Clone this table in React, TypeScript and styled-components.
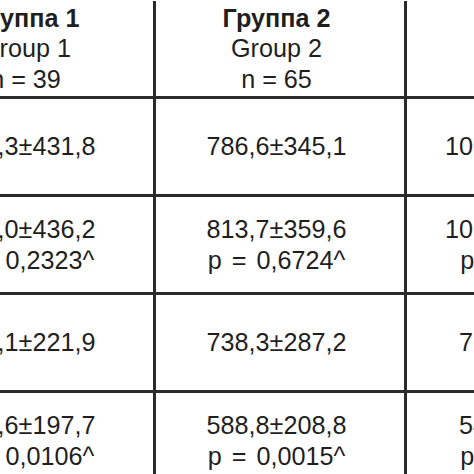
import React from "react";
import styled, { createGlobalStyle } from "styled-components";

const Global = createGlobalStyle`
  html, body {
    margin: 0;
    padding: 0;
    background: #ffffff;
    overflow: hidden;
  }
  body {
    width: 474px;
    height: 474px;
  }
`;

const Viewport = styled.div`
  width: 474px;
  height: 474px;
  overflow: hidden;
  background: #ffffff;
`;

const Table = styled.div`
  display: grid;
  grid-template-columns: repeat(3, 251px);
  grid-auto-rows: 98px;
  margin-left: -95px;
  margin-top: 1px;
  width: max-content;
  font-family: "Liberation Sans", Arial, sans-serif;
  font-size: 25.2px;
  line-height: 30.5px;
  color: #1f1f1f;
`;

const Cell = styled.div<{ $last?: boolean }>`
  box-sizing: border-box;
  display: flex;
  flex-direction: column;
  align-items: center;
  justify-content: center;
  text-align: center;
  white-space: nowrap;
  padding-right: 7px;
  border-bottom: 3px solid #2b2b2b;
  border-right: ${(p) => (p.$last ? "none" : "3px solid #2b2b2b")};
`;

const Title = styled.span`
  font-weight: bold;
`;

const HeadLine = styled.span``;

const ValueLine = styled.span`
  word-spacing: 3px;
`;

type Row = { lines: string[] }[];

const header = [
  { title: "Группа 1", sub: "Group 1", n: "n = 39" },
  { title: "Группа 2", sub: "Group 2", n: "n = 65" },
  { title: "Группа 3", sub: "Group 3", n: "n = 42" },
];

const rows: Row[] = [
  [
    { lines: ["845,3±431,8"] },
    { lines: ["786,6±345,1"] },
    { lines: ["1034,2±1012,6"] },
  ],
  [
    { lines: ["853,0±436,2", "p = 0,2323^"] },
    { lines: ["813,7±359,6", "p = 0,6724^"] },
    { lines: ["1056,8±1088,4", "p = 0,0312^"] },
  ],
  [
    { lines: ["742,1±221,9"] },
    { lines: ["738,3±287,2"] },
    { lines: ["712,4±265,3"] },
  ],
  [
    { lines: ["512,6±197,7", "p = 0,0106^"] },
    { lines: ["588,8±208,8", "p = 0,0015^"] },
    { lines: ["543,7±221,5", "p = 0,0041^"] },
  ],
];

export default function App() {
  return (
    <Viewport>
      <Global />
      <Table>
        {header.map((h, i) => (
          <Cell key={"h" + i} $last={i === header.length - 1}>
            <Title>{h.title}</Title>
            <HeadLine>{h.sub}</HeadLine>
            <HeadLine>{h.n}</HeadLine>
          </Cell>
        ))}
        {rows.map((row, r) =>
          row.map((cell, c) => (
            <Cell key={r + "-" + c} $last={c === row.length - 1}>
              {cell.lines.map((l, k) => (
                <ValueLine key={k}>{l}</ValueLine>
              ))}
            </Cell>
          ))
        )}
      </Table>
    </Viewport>
  );
}
